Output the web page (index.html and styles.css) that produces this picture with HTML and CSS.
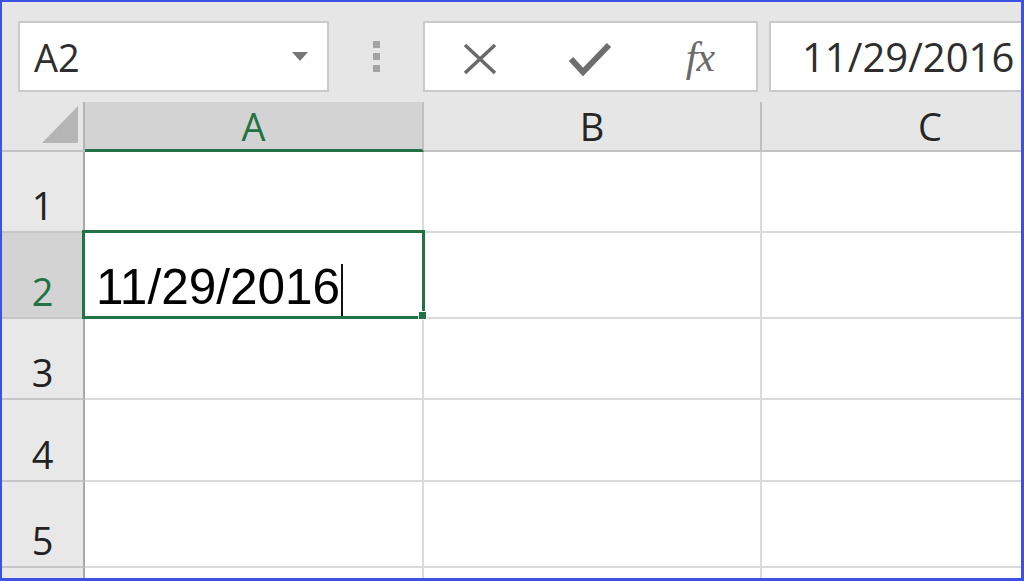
FILE: index.html
```html
<!DOCTYPE html>
<html>
<head>
<meta charset="utf-8">
<link rel="stylesheet" href="styles.css">
</head>
<body>
<div class="frame">
  <div class="toolbar">
    <div class="namebox"><span class="name">A2</span><span class="dropdown"></span></div>
    <div class="grip"><i></i><i></i><i></i></div>
    <div class="fbuttons">
      <span class="fbtn"><svg width="36" height="32" viewBox="0 0 36 32"><path d="M3 2 L33 30 M33 2 L3 30" stroke="#6a6a6a" stroke-width="3.5" fill="none"/></svg></span>
      <span class="fbtn"><svg width="44" height="34" viewBox="0 0 44 34"><path d="M3 17 L15 30 L41 3" stroke="#6e6e6e" stroke-width="6" fill="none"/></svg></span>
      <span class="fbtn fx">fx</span>
    </div>
    <div class="finput">11/29/2016</div>
  </div>
  <div class="sheet">
    <div class="corner"><span class="tri"></span></div>
    <div class="ch sel">A</div>
    <div class="ch">B</div>
    <div class="ch">C</div>

    <div class="rh">1</div>
    <div class="cell"></div>
    <div class="cell"></div>
    <div class="cell"></div>

    <div class="rh sel">2</div>
    <div class="cell active"><span class="val">11/29/2016</span><span class="cursor"></span><div class="selection"><span class="handle"></span></div></div>
    <div class="cell"></div>
    <div class="cell"></div>

    <div class="rh">3</div>
    <div class="cell"></div>
    <div class="cell"></div>
    <div class="cell"></div>

    <div class="rh">4</div>
    <div class="cell"></div>
    <div class="cell"></div>
    <div class="cell"></div>

    <div class="rh">5</div>
    <div class="cell"></div>
    <div class="cell"></div>
    <div class="cell"></div>

    <div class="rh last"></div>
    <div class="cell last"></div>
    <div class="cell last"></div>
    <div class="cell last"></div>
  </div>
</div>
</body>
</html>
```
FILE: styles.css
```css
html, body {
  margin: 0;
  padding: 0;
}
body {
  width: 1024px;
  height: 581px;
  overflow: hidden;
  font-family: "Open Sans", "Liberation Sans", sans-serif;
}
.frame {
  box-sizing: border-box;
  width: 1024px;
  height: 581px;
  border-style: solid;
  border-color: #3d52e4;
  border-width: 2px 3px 3px 2px;
  display: flex;
  flex-direction: column;
  background: #e6e6e6;
  overflow: hidden;
}
.toolbar {
  box-sizing: border-box;
  height: 100px;
  flex: none;
  display: flex;
  align-items: flex-start;
  padding: 19px 0 0 16px;
}
.namebox {
  box-sizing: border-box;
  width: 311px;
  height: 71px;
  background: #fff;
  border: 2px solid #cacaca;
  display: flex;
  align-items: center;
  justify-content: space-between;
  padding: 0 19px 0 14px;
}
.name {
  font-size: 38px;
  line-height: 1;
  color: #2e2e2e;
}
.dropdown {
  width: 0;
  height: 0;
  border-left: 8px solid transparent;
  border-right: 8px solid transparent;
  border-top: 9px solid #777;
}
.grip {
  width: 94px;
  height: 71px;
  display: flex;
  flex-direction: column;
  align-items: center;
  justify-content: center;
  gap: 5px;
}
.grip i {
  display: block;
  width: 7px;
  height: 7px;
  background: #a3a3a3;
}
.fbuttons {
  box-sizing: border-box;
  width: 335px;
  height: 71px;
  background: #fff;
  border: 2px solid #cacaca;
  display: flex;
  align-items: center;
}
.fbtn {
  width: 110px;
  display: flex;
  justify-content: center;
  align-items: center;
  margin-top: 4px;
}
.fx {
  font-family: "Liberation Serif", serif;
  font-style: italic;
  font-size: 42px;
  line-height: 1;
  color: #6b6b6b;
  margin-top: 0;
  letter-spacing: -1px;
}
.finput {
  box-sizing: border-box;
  flex: 1;
  height: 71px;
  margin-left: 11px;
  background: #fff;
  border: 2px solid #cacaca;
  border-right: none;
  display: flex;
  align-items: center;
  padding-left: 31px;
  font-size: 40px;
  line-height: 1;
  color: #2e2e2e;
  white-space: nowrap;
  overflow: hidden;
}
.sheet {
  flex: 1;
  display: grid;
  grid-template-columns: 83px 339px 338px 338px;
  grid-template-rows: 50px 81px 86px 81px 82px 86px 1fr;
  background: #fff;
}
.sheet > div {
  box-sizing: border-box;
}
.corner {
  background: #e6e6e6;
  border-right: 2px solid #b4b4b4;
  border-bottom: 2px solid #c2c2c2;
  display: flex;
  justify-content: flex-end;
  align-items: flex-end;
  padding: 0 5px 7px 0;
}
.tri {
  display: block;
  width: 36px;
  height: 37px;
  background: #b5b5b5;
  clip-path: polygon(100% 0, 100% 100%, 0 100%);
}
.ch {
  background: #e6e6e6;
  border-right: 2px solid #c0c0c0;
  border-bottom: 2px solid #c2c2c2;
  display: flex;
  justify-content: center;
  align-items: center;
  font-size: 38px;
  line-height: 1;
  color: #262626;
}
.ch.sel {
  background: #d3d3d3;
  color: #217346;
  border-bottom: 3px solid #217346;
}
.rh {
  background: #e8e8e8;
  border-right: 2px solid #a8a8a8;
  border-bottom: 2px solid #c6c6c6;
  display: flex;
  justify-content: center;
  align-items: flex-end;
  padding-bottom: 7px;
  font-size: 38px;
  line-height: 1;
  color: #222;
}
.rh.sel {
  background: #d3d3d3;
  color: #217346;
}
.cell {
  border-right: 2px solid #dadada;
  border-bottom: 2px solid #dadada;
}
.rh.last, .cell.last {
  border-bottom: none;
}
.cell.active {
  position: relative;
  display: flex;
  align-items: flex-end;
  padding: 0 0 6px 11px;
  font-family: "Liberation Sans", Arial, sans-serif;
  font-size: 49.5px;
  line-height: 1;
  color: #000;
}
.cursor {
  display: inline-block;
  width: 2px;
  height: 54px;
  background: #111;
  margin-left: 1px;
  margin-bottom: -7px;
}
.selection {
  position: absolute;
  top: -3px;
  left: -3px;
  right: -3px;
  bottom: -2px;
  border: 3px solid #217346;
  z-index: 2;
}
.handle {
  position: absolute;
  right: -5px;
  bottom: -4px;
  width: 7px;
  height: 7px;
  background: #217346;
  border: 1px solid #fff;
}
```
